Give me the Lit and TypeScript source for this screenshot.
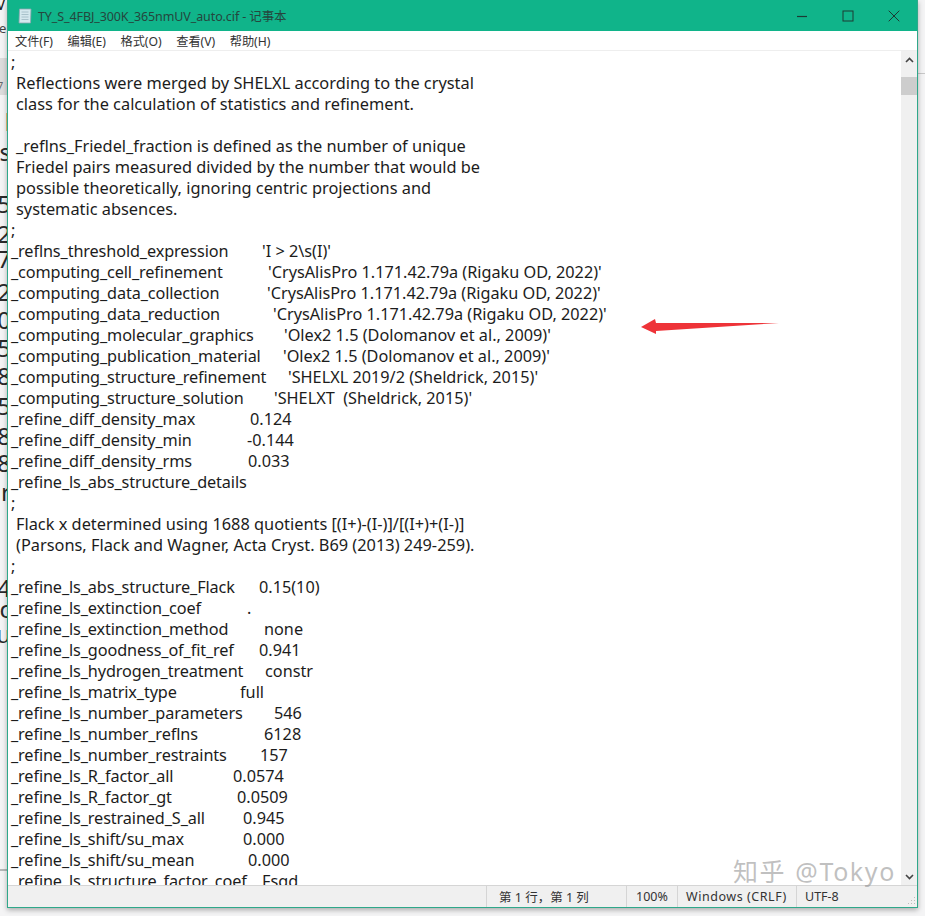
import { LitElement, html, css, svg } from "lit";
import { customElement } from "lit/decorators.js";

type Line = { key: string; x?: number; value?: string; indent?: boolean };

const t = (key: string): Line => ({ key, indent: true });
const k = (key: string, x?: number, value?: string): Line => ({ key, x, value });

const LINES: Line[] = [
  k(";"),
  t("Reflections were merged by SHELXL according to the crystal"),
  t("class for the calculation of statistics and refinement."),
  k(" "),
  t("_reflns_Friedel_fraction is defined as the number of unique"),
  t("Friedel pairs measured divided by the number that would be"),
  t("possible theoretically, ignoring centric projections and"),
  t("systematic absences."),
  k(";"),
  k("_reflns_threshold_expression", 262, "'I > 2\\s(I)'"),
  k("_computing_cell_refinement", 268, "'CrysAlisPro 1.171.42.79a (Rigaku OD, 2022)'"),
  k("_computing_data_collection", 267, "'CrysAlisPro 1.171.42.79a (Rigaku OD, 2022)'"),
  k("_computing_data_reduction", 273, "'CrysAlisPro 1.171.42.79a (Rigaku OD, 2022)'"),
  k("_computing_molecular_graphics", 284, "'Olex2 1.5 (Dolomanov et al., 2009)'"),
  k("_computing_publication_material", 283, "'Olex2 1.5 (Dolomanov et al., 2009)'"),
  k("_computing_structure_refinement", 288, "'SHELXL 2019/2 (Sheldrick, 2015)'"),
  k("_computing_structure_solution", 274, "'SHELXT  (Sheldrick, 2015)'"),
  k("_refine_diff_density_max", 250, "0.124"),
  k("_refine_diff_density_min", 247, "-0.144"),
  k("_refine_diff_density_rms", 248, "0.033"),
  k("_refine_ls_abs_structure_details"),
  k(";"),
  t("Flack x determined using 1688 quotients [(I+)-(I-)]/[(I+)+(I-)]"),
  t("(Parsons, Flack and Wagner, Acta Cryst. B69 (2013) 249-259)."),
  k(";"),
  k("_refine_ls_abs_structure_Flack", 259, "0.15(10)"),
  k("_refine_ls_extinction_coef", 247, "."),
  k("_refine_ls_extinction_method", 264, "none"),
  k("_refine_ls_goodness_of_fit_ref", 259, "0.941"),
  k("_refine_ls_hydrogen_treatment", 265, "constr"),
  k("_refine_ls_matrix_type", 240, "full"),
  k("_refine_ls_number_parameters", 274, "546"),
  k("_refine_ls_number_reflns", 264, "6128"),
  k("_refine_ls_number_restraints", 260, "157"),
  k("_refine_ls_R_factor_all", 233, "0.0574"),
  k("_refine_ls_R_factor_gt", 237, "0.0509"),
  k("_refine_ls_restrained_S_all", 243, "0.945"),
  k("_refine_ls_shift/su_max", 243, "0.000"),
  k("_refine_ls_shift/su_mean", 248, "0.000"),
  k("_refine_ls_structure_factor_coef", 262, "Fsqd"),
];

const MENU = ["文件(F)", "编辑(E)", "格式(O)", "查看(V)", "帮助(H)"];

const TEXT_ORIGIN = 11;

// Fragments of the page hidden behind the window: only their right edge shows.
const BEHIND: [string, number][] = [
  ["l", 112],
  ["s", 142],
  ["5", 194],
  ["2", 224],
  ["7", 249],
  ["2", 282],
  ["0", 310],
  ["5", 338],
  ["8", 366],
  ["5", 396],
  ["8", 426],
  ["8", 453],
  ["r", 482],
  ["4", 578],
  ["c", 599],
  ["u", 624],
];

@customElement("app-root")
export class AppRoot extends LitElement {
  static styles = css`
    :host {
      display: block;
      width: 925px;
      height: 916px;
      position: relative;
      overflow: hidden;
      background: #f4f4f5;
      font-family: "Noto Sans", "Noto Sans CJK SC", sans-serif;
    }
    .strip {
      position: absolute;
      left: 0;
      top: 0;
      width: 7px;
      height: 100%;
      overflow: hidden;
    }
    .band {
      position: absolute;
      left: 0;
      top: 58px;
      width: 100%;
      height: 37px;
      background: #dcdcdc;
    }
    .small-7 {
      position: absolute;
      left: -3px;
      top: 79px;
      font-size: 11px;
      line-height: 14px;
      color: #666;
    }
    .line-r {
      position: absolute;
      right: 0;
      top: 73px;
      width: 10px;
      height: 1px;
      background: #c8c8c8;
    }
    .line-l {
      position: absolute;
      left: 0;
      top: 869px;
      width: 100%;
      height: 2px;
      background: #b4b8b8;
    }
    .frag {
      position: absolute;
      right: -4px;
      font-size: 24px;
      line-height: 20px;
      color: #2a2a2a;
    }
    .top-v {
      position: absolute;
      left: -4px;
      top: -6px;
      font-size: 16px;
      line-height: 20px;
      color: #222;
    }
    .top-e {
      position: absolute;
      left: -1px;
      top: 20px;
      font-size: 13px;
      line-height: 16px;
      color: #444;
    }
    .window {
      position: absolute;
      left: 7px;
      top: 0;
      width: 911px;
      height: 908px;
      display: flex;
      flex-direction: column;
      background: #fff;
      border: 1px solid #2fa88a;
      border-top: none;
      box-sizing: border-box;
      box-shadow: 0 2px 5px rgba(0, 0, 0, 0.3);
    }
    .title {
      height: 31px;
      flex: none;
      background: #10b48a;
      display: flex;
      align-items: center;
      padding-left: 9px;
      color: #24463d;
      font-size: 12.5px;
      letter-spacing: -0.1px;
    }
    .title-icon { margin-right: 5px; }
    .spacer { flex: 1; }
    .ctl {
      width: 46px;
      height: 31px;
      display: flex;
      align-items: center;
      justify-content: center;
    }
    .menu {
      height: 19px;
      flex: none;
      display: flex;
      align-items: center;
      gap: 14.5px;
      padding-left: 7px;
      font-size: 12.2px;
      color: #333;
      border-bottom: 1px solid #eee;
    }
    .body { flex: 1; min-height: 0; display: flex; }
    .text {
      flex: 1;
      min-width: 0;
      overflow: hidden;
      font-size: 16.25px;
      line-height: 21px;
      color: #1c1c1c;
      white-space: pre;
      padding: 1px 0 0 3px;
    }
    .row { display: flex; height: 21px; }
    .row.indent { padding-left: 5px; font-size: 16.35px; }
    .key { letter-spacing: -0.12px; }
    .indent .key { letter-spacing: 0; }
    .val { flex: none; }
    .key.fixed { flex: none; }
    .scroll {
      width: 16px;
      flex: none;
      background: #f0f0f0;
      display: flex;
      flex-direction: column;
      align-items: center;
      justify-content: space-between;
      padding: 6px 0 5px;
      box-sizing: border-box;
      position: relative;
    }
    .thumb {
      position: absolute;
      top: 26px;
      left: 0;
      width: 16px;
      height: 18px;
      background: #cdcdcd;
    }
    .status {
      height: 21px;
      flex: none;
      display: flex;
      background: #f0f0f0;
      border-top: 1px solid #d5d5d5;
      font-size: 12.5px;
      color: #333;
    }
    .lead { width: 478px; }
    .cell {
      display: flex;
      align-items: center;
      border-left: 1px solid #d5d5d5;
      box-sizing: border-box;
    }
    .pos { width: 140px; padding-left: 12px; }
    .zoom { width: 51px; padding-left: 9px; }
    .eol { width: 119px; padding-left: 8px; letter-spacing: 0.55px; }
    .enc { flex: 1; padding-left: 8px; position: relative; }
    .grip { position: absolute; right: 1px; bottom: 1px; }
    .arrow { position: absolute; left: 640px; top: 318px; }
    .mark {
      position: absolute;
      left: 733px;
      top: 858px;
      font-size: 25px;
      letter-spacing: 1.6px;
      word-spacing: 1px;
      color: rgba(130, 130, 130, 0.5);
      white-space: nowrap;
      line-height: 27px;
    }
  `;

  private renderLine(l: Line) {
    if (l.x === undefined) {
      return html`<div class="row ${l.indent ? "indent" : ""}"><span class="key">${l.key}</span></div>`;
    }
    return html`<div class="row">
      <span class="key fixed" style="width:${l.x - TEXT_ORIGIN}px">${l.key}</span>
      <span class="val">${l.value}</span>
    </div>`;
  }

  render() {
    return html`
      <div class="line-r"></div>
      <div class="strip">
        <div class="band"></div>
        <div class="line-l"></div>
        <span class="small-7">7</span>
        <span class="top-v">V</span>
        <span class="top-e">e</span>
        ${BEHIND.map(([c, y]) => html`<span class="frag" style="top:${y}px">${c}</span>`)}
      </div>
      <div class="window">
        <div class="title">
          <svg class="title-icon" width="16" height="16" viewBox="0 0 16 16">
            <path d="M2.5 1h11.5l-.5 14H2z" fill="#d4e8ee" stroke="#8aa6ae" stroke-width=".8" />
            <path d="M4.5 4h7M4.5 6.5h7M4.5 9h7M4.5 11.5h7" stroke="#9db8c2" stroke-width=".8" />
          </svg>
          <span>TY_S_4FBJ_300K_365nmUV_auto.cif - 记事本</span>
          <span class="spacer"></span>
          <div class="ctl">
            <svg width="12" height="12" viewBox="0 0 12 12"><path d="M1 6.5h10" stroke="#1c3a33" stroke-width="1.2" /></svg>
          </div>
          <div class="ctl">
            <svg width="12" height="12" viewBox="0 0 12 12"><rect x="1" y="1" width="10" height="10" fill="none" stroke="#1c3a33" /></svg>
          </div>
          <div class="ctl">
            <svg width="12" height="12" viewBox="0 0 12 12"><path d="M.7.7l10.6 10.6M11.3.7L.7 11.3" stroke="#1c3a33" /></svg>
          </div>
        </div>
        <div class="menu">${MENU.map((m) => html`<span>${m}</span>`)}</div>
        <div class="body">
          <div class="text">${LINES.map((l) => this.renderLine(l))}</div>
          <div class="scroll">
            <svg width="9" height="6" viewBox="0 0 9 6"><path d="M1 5l3.5-3.5L8 5" fill="none" stroke="#444" stroke-width="1.6" /></svg>
            <div class="thumb"></div>
            <svg width="9" height="6" viewBox="0 0 9 6"><path d="M1 1l3.5 3.5L8 1" fill="none" stroke="#444" stroke-width="1.6" /></svg>
          </div>
        </div>
        <div class="status">
          <div class="lead"></div>
          <div class="cell pos">第 1 行，第 1 列</div>
          <div class="cell zoom">100%</div>
          <div class="cell eol">Windows (CRLF)</div>
          <div class="cell enc">
            UTF-8
            <svg class="grip" width="10" height="10" viewBox="0 0 10 10">
              <path d="M8 1h1v1H8zM5 4h1v1H5zM8 4h1v1H8zM2 7h1v1H2zM5 7h1v1H5zM8 7h1v1H8z" fill="#bbb" />
            </svg>
          </div>
        </div>
      </div>
      <svg class="arrow" width="142" height="18" viewBox="0 0 142 18">
        ${svg`<path d="M1 9 L15 1 L16 5 L139 5 L16 13 L16 16 Z" fill="#ee3338" />`}
      </svg>
      <div class="mark">知乎 @Tokyo</div>
    `;
  }
}
